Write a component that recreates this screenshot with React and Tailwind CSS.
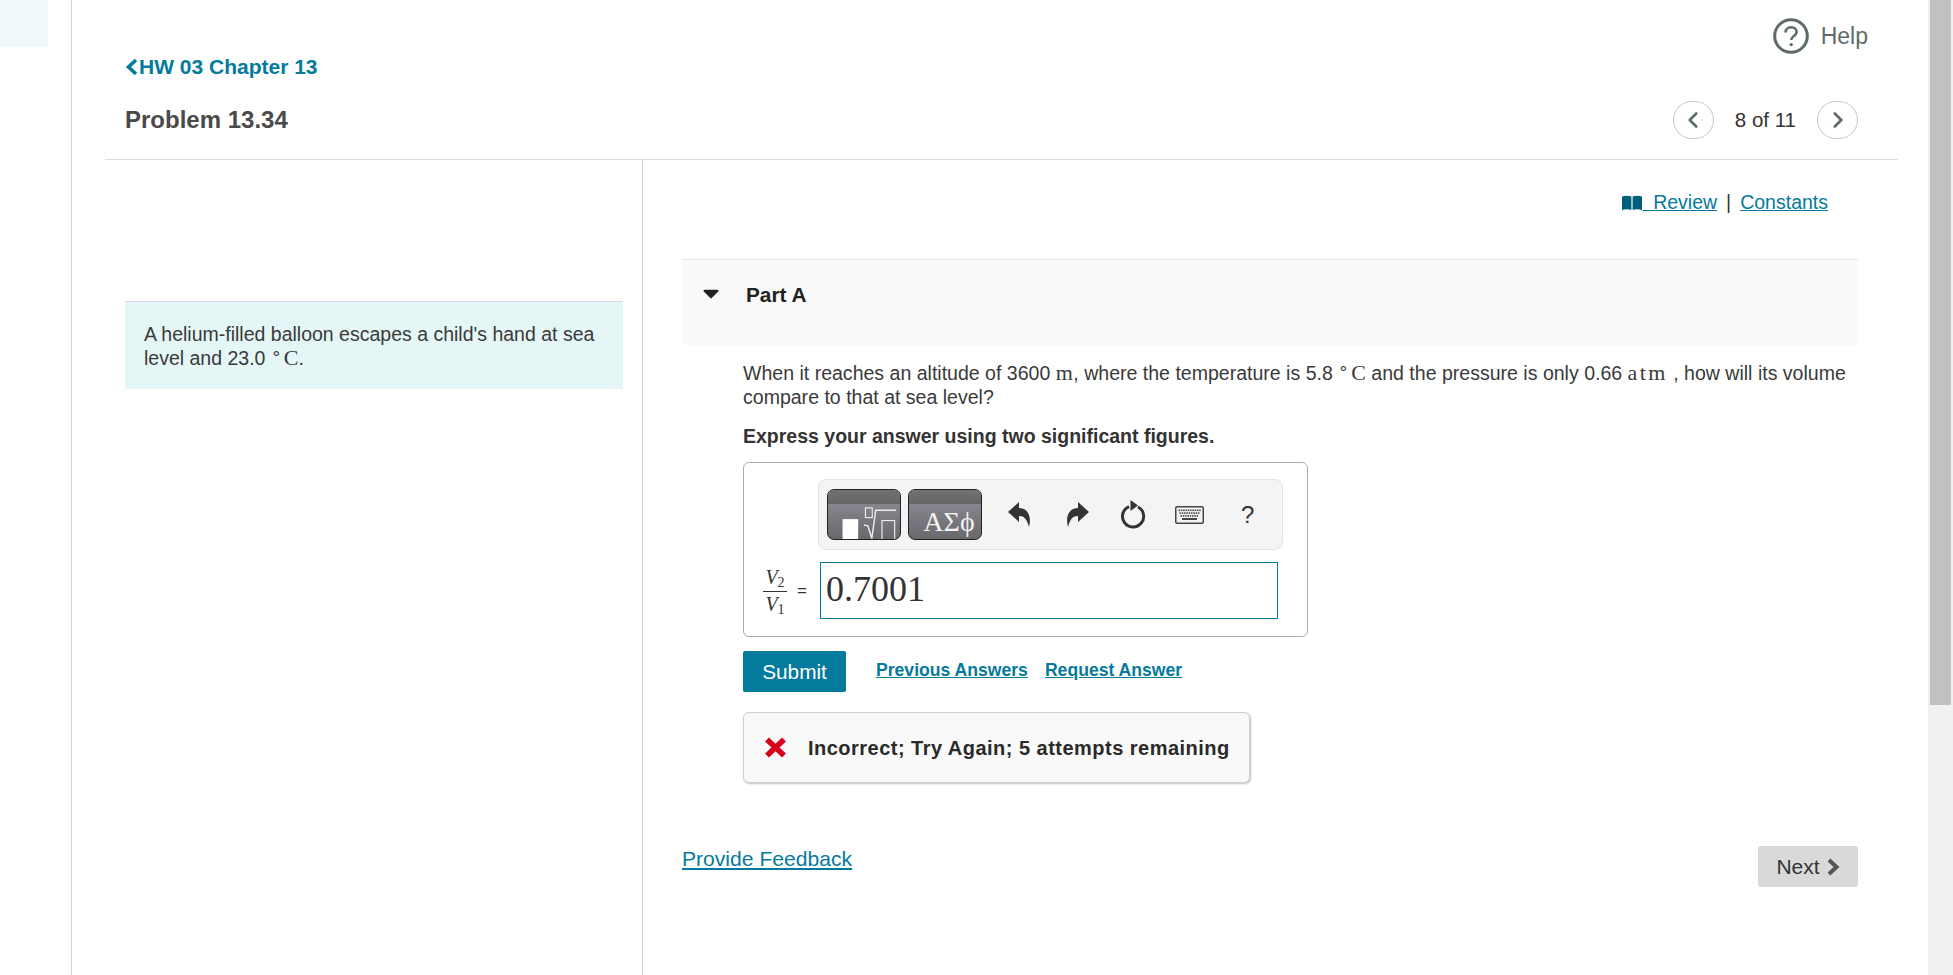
import React from "react";
import { ChevronLeft, ChevronRight } from "lucide-react";
import { FaCaretDown } from "react-icons/fa";

const serif = "font-['Liberation_Serif',serif]";

function HelpIcon() {
  return (
    <svg width="36" height="36" viewBox="0 0 36 36" fill="none" stroke="#5f6b6b" strokeWidth="3">
      <circle cx="18" cy="18" r="16.3" />
      <path d="M12.5 14.5c0-3.2 2.4-5.2 5.6-5.2s5.5 1.9 5.5 4.6c0 4.2-5.4 4-5.4 8.2" strokeWidth="2.6" />
      <circle cx="18.2" cy="26.6" r="1.7" fill="#5f6b6b" stroke="none" />
    </svg>
  );
}

function BookIcon() {
  return (
    <svg width="20" height="16" viewBox="0 0 20 16">
      <path d="M0 1.5C3 .6 6.5.6 9.4 1.5V15C6.5 14 3 14 0 15zM10.6 1.5C13.5.6 17 .6 20 1.5V15c-3-1-6.5-1-9.4 0z" fill="#005e7d" />
    </svg>
  );
}

function TemplateGlyph() {
  return (
    <svg width="74" height="37" viewBox="0 0 74 37" fill="none" stroke="#ececec" strokeWidth="1.2">
      <rect x="15" y="15" width="16" height="22" fill="#fff" stroke="none" />
      <rect x="38.5" y="3.5" width="7" height="10" />
      <path d="M37 21l4 1 4 13 4-29h21" strokeWidth="1.5" />
      <rect x="55.5" y="16.5" width="13" height="20" />
    </svg>
  );
}

function UndoIcon({ flip }) {
  return (
    <svg width="23" height="26" viewBox="0 0 23 26" className={flip ? "-scale-x-100" : ""}>
      <path d="M0 10 L11 0 V6 C19 6 24 13 21 25 C19 17 16 14 11 14 V20 Z" fill="#333" />
    </svg>
  );
}

function RefreshIcon() {
  return (
    <svg width="26" height="30" viewBox="0 0 26 30" fill="none">
      <path d="M9 6.6A10.6 10.6 0 1 0 18 7" stroke="#333" strokeWidth="3" />
      <path d="M10.5 0 L18 5.5 L10.5 11 Z" fill="#333" />
    </svg>
  );
}

function KeyboardIcon() {
  const dots = [];
  for (let r = 0; r < 3; r++) {
    for (let c = 0; c < 10 - r; c++) {
      dots.push(<rect key={r + "-" + c} x={3.5 + c * 2.3 + r} y={3.5 + r * 2.8} width="1.5" height="1.6" fill="#444" />);
    }
  }
  return (
    <svg width="29" height="18" viewBox="0 0 29 18">
      <rect x="0.75" y="0.75" width="27.5" height="16.5" rx="1.5" fill="#f4f4f4" stroke="#444" strokeWidth="1.5" />
      {dots}
      <rect x="7" y="12" width="15" height="2" fill="#444" />
    </svg>
  );
}

function ToolButton({ children }) {
  return (
    <div className="w-[74px] h-[51px] rounded-[7px] border border-[#222] overflow-hidden flex flex-col bg-gradient-to-b from-[#94929b] to-[#69686d]">
      <div className="h-[14px] shrink-0 bg-gradient-to-b from-[#727272] to-[#666666]" />
      <div className="flex-1 flex items-end justify-center">{children}</div>
    </div>
  );
}

function Degree() {
  return (
    <span className={serif + " text-[22px]"}>
      <sup className="text-[17px] top-[-7px] pr-[2px]">∘</sup>C
    </span>
  );
}

export default function App() {
  return (
    <div className="flex h-[975px] w-full overflow-hidden bg-white font-['Liberation_Sans',Arial,sans-serif] text-[#333]">
      {/* left rail */}
      <aside className="w-[72px] shrink-0 border-r border-[#d4d4d4]">
        <div className="w-[48px] h-[47px] bg-[#eff8fb] rounded-br-[4px]" />
      </aside>

      {/* page */}
      <main className="flex-1 flex flex-col min-w-0 pl-[33px] pr-[30px]">
        <header className="h-[160px] shrink-0 border-b border-[#dedede] pl-[20px] pr-[40px] flex flex-col">
          <div className="h-[18px] flex justify-end pt-[18px]">
            <div className="flex items-center gap-[12px] h-[36px] shrink-0 text-[23px] text-[#5f6b6b] mr-[-10px]">
              <HelpIcon />
              <span>Help</span>
            </div>
          </div>
          <a className="mt-[37px] h-[24px] flex items-center text-[21px] leading-[24px] font-bold text-[#047a9c]">
            <svg width="14" height="18" viewBox="0 0 14 18" fill="none" stroke="#047a9c" strokeWidth="3.6" className="shrink-0">
              <path d="M11 2 L3.5 9 L11 16" />
            </svg>
            <span>HW 03 Chapter 13</span>
          </a>
          <div className="mt-[21px] flex items-center justify-between h-[40px]">
            <h1 className="text-[24px] font-bold text-[#4a4a4a]">Problem 13.34</h1>
            <div className="flex items-center">
              <div className="w-[41px] h-[38px] rounded-full border border-[#c8c8c8] flex items-center justify-center text-[#5f6b6b]">
                <ChevronLeft size={26} strokeWidth={2.4} />
              </div>
              <span className="mx-[21px] text-[20.5px] text-[#333]">8 of 11</span>
              <div className="w-[41px] h-[38px] rounded-full border border-[#c8c8c8] flex items-center justify-center text-[#5f6b6b]">
                <ChevronRight size={26} strokeWidth={2.4} />
              </div>
            </div>
          </div>
        </header>

        <div className="flex-1 flex min-h-0">
          {/* left column */}
          <section className="w-[538px] shrink-0 border-r border-[#c8cdd1] pl-[20px] pr-[19px] pt-[141px]">
            <div className="h-[88px] bg-[#e5f6f7] border-t border-[#d3dde0] px-[19px] pt-[20px] text-[19.5px] leading-[24px] text-[#3a3a3a]">
              A helium-filled balloon escapes a child's hand at sea level and 23.0 <Degree />.
            </div>
          </section>

          {/* right column */}
          <section className="flex-1 min-w-0 pl-[39px] pr-[40px]">
            <div className="h-[32px] mt-[27px] flex items-center justify-end pr-[30px] text-[19.5px] text-[#333]">
              <BookIcon />
              <a className="underline text-[#047a9c] whitespace-pre">  Review</a>
              <span className="mx-[9px]">|</span>
              <a className="underline text-[#047a9c]">Constants</a>
            </div>

            <div className="mt-[40px] h-[86px] bg-[#f9f9f9] border-t border-[#e4e4e4] flex pt-[20px]">
              <FaCaretDown className="ml-[16px] w-[26px] h-[26px] text-[#222]" />
              <span className="ml-[22px] text-[20.8px] leading-[30px] font-bold text-[#222]">Part A</span>
            </div>

            <div className="pl-[61px]">
              <p className="mt-[16px] text-[19.55px] leading-[24px] text-[#3a3a3a]">
                When it reaches an altitude of 3600 <span className={serif + " text-[22px] tracking-[0.5px]"}>m</span>, where the temperature is 5.8 <Degree /> and the pressure is only 0.66 <span className={serif + " text-[22px] tracking-[2.4px]"}>atm</span> , how will its volume compare to that at sea level?
              </p>
              <p className="mt-[15px] text-[19.5px] leading-[24px] font-bold text-[#333]">Express your answer using two significant figures.</p>

              {/* answer box */}
              <div className="mt-[14px] w-[565px] h-[175px] border border-[#aaa] rounded-[6px] pl-[19px] pt-[16px]">
                <div className="ml-[55px] w-[465px] h-[71px] bg-[#f4f4f4] border border-[#e3e3e3] rounded-[8px] flex items-center pl-[8px]">
                  <div className="flex gap-[7px]">
                    <ToolButton><TemplateGlyph /></ToolButton>
                    <ToolButton>
                      <span className={serif + " text-[28px] leading-[36px] text-[#f2f2f2] ml-[8px]"}>ΑΣϕ</span>
                    </ToolButton>
                  </div>
                  <div className="flex items-center ml-[26px]">
                    <UndoIcon />
                    <span className="w-[35px]" />
                    <UndoIcon flip />
                    <span className="w-[31px]" />
                    <RefreshIcon />
                    <span className="w-[29px]" />
                    <KeyboardIcon />
                    <span className="ml-[37px] text-[24px] text-[#333]">?</span>
                  </div>
                </div>

                <div className="mt-[12px] flex items-center">
                  <div className={serif + " w-[24px] flex flex-col items-center italic text-[20px] text-[#333]"}>
                    <span className="border-b border-[#333] w-full text-center leading-[27px]">V<sub className="not-italic text-[14px] bottom-[-3px]">2</sub></span>
                    <span className="leading-[25px]">V<sub className="not-italic text-[14px] bottom-[-3px]">1</sub></span>
                  </div>
                  <span className="ml-[10px] text-[17px] text-[#333]">=</span>
                  <div className={serif + " ml-[13px] w-[458px] h-[57px] border border-[#047a9c] pl-[5px] text-[36px] leading-[52px] text-[#333]"}>0.7001</div>
                </div>
              </div>

              <div className="mt-[14px] flex items-center h-[41px]">
                <button className="w-[103px] h-[41px] rounded-[2px] bg-[#047a9c] text-white text-[20.8px]">Submit</button>
                <a className="ml-[30px] mb-[2px] text-[17.6px] font-bold underline text-[#047a9c]">Previous Answers</a>
                <a className="ml-[17px] mb-[2px] text-[17.6px] font-bold underline text-[#047a9c]">Request Answer</a>
              </div>

              <div className="mt-[20px] w-[507px] h-[71px] bg-[#f9f9f9] border border-[#cfcfcf] rounded-[6px] shadow-[1px_1px_2px_rgba(0,0,0,0.25)] flex items-center pl-[20px]">
                <svg width="23" height="21" viewBox="0 0 23 21" fill="none" stroke="#d9001b" strokeWidth="5.6">
                  <path d="M3 2.5 L20 18.5 M20 2.5 L3 18.5" />
                </svg>
                <span className="ml-[21px] text-[20px] font-bold text-[#2a2a2a] tracking-[0.48px]">Incorrect; Try Again; 5 attempts remaining</span>
              </div>
            </div>

            <div className="mt-[63px] flex items-start justify-between">
              <a className="text-[21.1px] leading-[26px] underline text-[#047a9c]">Provide Feedback</a>
              <button className="w-[100px] h-[41px] rounded-[3px] bg-[#d9d9d9] text-[21px] text-[#333] flex items-center justify-center gap-[6px]">
                Next
                <svg width="14" height="18" viewBox="0 0 14 18" fill="none" stroke="#555" strokeWidth="4">
                  <path d="M3 2 L10.5 9 L3 16" />
                </svg>
              </button>
            </div>
          </section>
        </div>
      </main>

      {/* scrollbar */}
      <div className="w-[25px] shrink-0 bg-[#f1f1f1] px-[2px]">
        <div className="h-[705px] bg-[#c1c1c1]" />
      </div>
    </div>
  );
}
